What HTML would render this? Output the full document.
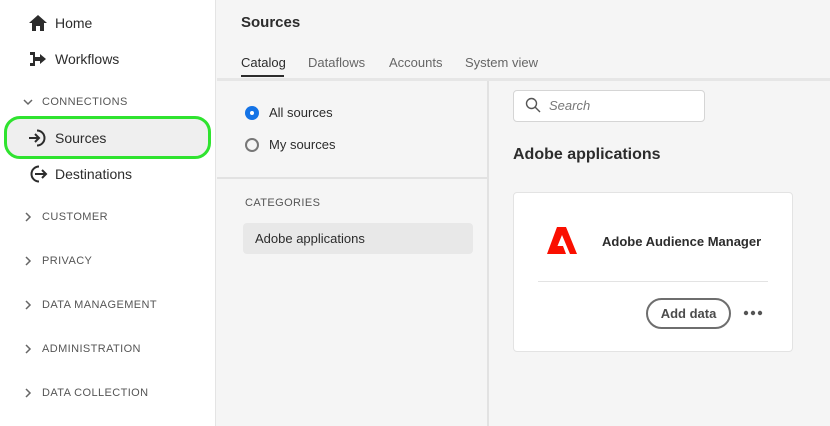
<!DOCTYPE html>
<html><head><style>
*{margin:0;padding:0;box-sizing:border-box}
body{width:830px;height:426px;overflow:hidden;font-family:"Liberation Sans",sans-serif;background:#f5f5f5;position:relative;color:#2c2c2c}
.a{position:absolute}
.side{left:0;top:0;width:216px;height:426px;background:#fff;border-right:1px solid #e4e4e4}
.nav{font-size:14px;color:#2c2c2c}
.sec{font-size:11px;color:#555;letter-spacing:.4px}
</style></head><body>
<div class="a side"></div>
<svg class="a" style="left:29px;top:15px" width="18" height="16" viewBox="0 0 18 16"><path d="M9 0L0 8h3v8h4v-5h4v5h4V8h3z" fill="#2c2c2c"/></svg>
<div class="a nav" style="left:55px;top:15px">Home</div>
<svg class="a" style="left:29px;top:51px" width="18" height="16" viewBox="0 0 18 16"><path d="M1 1h5v5h5V3l6 5-6 5v-3H6v5H1v-3h3V4H1z" fill="#2c2c2c"/></svg>
<div class="a nav" style="left:55px;top:51px">Workflows</div>
<svg class="a" style="left:23px;top:98px" width="10" height="8" viewBox="0 0 10 8"><path d="M1 2l4 4 4-4" stroke="#666" stroke-width="1.5" fill="none"/></svg>
<div class="a sec" style="left:42px;top:96px">CONNECTIONS</div>
<div class="a" style="left:4px;top:116px;width:207px;height:43px;border:3px solid #2fe32f;border-radius:16px;background:#efefef"></div>
<svg class="a" style="left:28px;top:128px" width="20" height="20" viewBox="0 0 20 20"><path d="M1 10h10M7 6l4 4-4 4" stroke="#2c2c2c" stroke-width="2" fill="none"/><path d="M9 2.5a7.5 7.5 0 1 1 0 15" stroke="#2c2c2c" stroke-width="2" fill="none"/></svg>
<div class="a nav" style="left:55px;top:130px">Sources</div>
<svg class="a" style="left:28px;top:164px" width="20" height="20" viewBox="0 0 20 20"><path d="M11 2.5a7.5 7.5 0 1 0 0 15" stroke="#2c2c2c" stroke-width="2" fill="none"/><path d="M7 10h11M14 6l4 4-4 4" stroke="#2c2c2c" stroke-width="2" fill="none"/></svg>
<div class="a nav" style="left:55px;top:166px">Destinations</div>
<svg class="a" style="left:24px;top:212px" width="8" height="10" viewBox="0 0 8 10"><path d="M2 1l4 4-4 4" stroke="#666" stroke-width="1.5" fill="none"/></svg><div class="a sec" style="left:42px;top:211px">CUSTOMER</div>
<svg class="a" style="left:24px;top:256px" width="8" height="10" viewBox="0 0 8 10"><path d="M2 1l4 4-4 4" stroke="#666" stroke-width="1.5" fill="none"/></svg><div class="a sec" style="left:42px;top:255px">PRIVACY</div>
<svg class="a" style="left:24px;top:300px" width="8" height="10" viewBox="0 0 8 10"><path d="M2 1l4 4-4 4" stroke="#666" stroke-width="1.5" fill="none"/></svg><div class="a sec" style="left:42px;top:299px">DATA MANAGEMENT</div>
<svg class="a" style="left:24px;top:344px" width="8" height="10" viewBox="0 0 8 10"><path d="M2 1l4 4-4 4" stroke="#666" stroke-width="1.5" fill="none"/></svg><div class="a sec" style="left:42px;top:343px">ADMINISTRATION</div>
<svg class="a" style="left:24px;top:388px" width="8" height="10" viewBox="0 0 8 10"><path d="M2 1l4 4-4 4" stroke="#666" stroke-width="1.5" fill="none"/></svg><div class="a sec" style="left:42px;top:387px">DATA COLLECTION</div>

<div class="a" style="left:241px;top:14px;font-size:15px;font-weight:bold">Sources</div>
<div class="a" style="left:241px;top:55px;font-size:13px;color:#2c2c2c">Catalog</div>
<div class="a" style="left:241px;top:75px;width:43px;height:2px;background:#2c2c2c"></div>
<div class="a" style="left:308px;top:55px;font-size:13px;color:#666">Dataflows</div>
<div class="a" style="left:389px;top:55px;font-size:13px;color:#666">Accounts</div>
<div class="a" style="left:465px;top:55px;font-size:13px;color:#666">System view</div>
<div class="a" style="left:217px;top:78px;width:613px;height:3px;background:#e6e6e6"></div>
<div class="a" style="left:487px;top:81px;width:2px;height:345px;background:#e2e2e2"></div>
<div class="a" style="left:217px;top:177px;width:270px;height:2px;background:#e2e2e2"></div>

<div class="a" style="left:245px;top:106px;width:14px;height:14px;border-radius:50%;background:#1473e6"></div>
<div class="a" style="left:250px;top:111px;width:4px;height:4px;border-radius:50%;background:#fff"></div>
<div class="a" style="left:269px;top:105px;font-size:13px">All sources</div>
<div class="a" style="left:245px;top:138px;width:14px;height:14px;border-radius:50%;border:2px solid #777"></div>
<div class="a" style="left:269px;top:137px;font-size:13px">My sources</div>
<div class="a" style="left:245px;top:197px;font-size:11px;color:#555;letter-spacing:.4px">CATEGORIES</div>
<div class="a" style="left:243px;top:223px;width:230px;height:31px;background:#e8e8e8;border-radius:4px"></div>
<div class="a" style="left:255px;top:231px;font-size:13px">Adobe applications</div>

<div class="a" style="left:513px;top:90px;width:192px;height:32px;background:#fff;border:1px solid #d5d5d5;border-radius:4px"></div>
<svg class="a" style="left:525px;top:97px" width="16" height="16" viewBox="0 0 16 16"><circle cx="6.5" cy="6.5" r="5" stroke="#555" stroke-width="1.4" fill="none"/><path d="M10 10l5 5" stroke="#555" stroke-width="1.4"/></svg>
<div class="a" style="left:549px;top:98px;font-size:13px;font-style:italic;color:#777">Search</div>
<div class="a" style="left:513px;top:146px;font-size:16px;font-weight:bold">Adobe applications</div>

<div class="a" style="left:513px;top:192px;width:280px;height:160px;background:#fff;border:1px solid #e3e3e3;border-radius:4px"></div>
<svg class="a" style="left:547px;top:227px" width="30" height="27" viewBox="0 0 30 27"><path d="M10 0H19L30 27H23L15 8L10.5 19H16L19 27H0Z" fill="#fa0f00"/></svg>
<div class="a" style="left:602px;top:234px;font-size:13px;font-weight:bold;color:#2c2c2c">Adobe Audience Manager</div>
<div class="a" style="left:538px;top:281px;width:230px;height:1px;background:#e3e3e3"></div>
<div class="a" style="left:646px;top:298px;width:85px;height:31px;border:2px solid #6e6e6e;border-radius:16px;font-size:13px;font-weight:bold;color:#4b4b4b;text-align:center;line-height:27px">Add data</div>
<svg class="a" style="left:743px;top:310px" width="20" height="6" viewBox="0 0 20 6"><circle cx="3" cy="3" r="2.2" fill="#555"/><circle cx="10" cy="3" r="2.2" fill="#555"/><circle cx="17" cy="3" r="2.2" fill="#555"/></svg>
</body></html>
